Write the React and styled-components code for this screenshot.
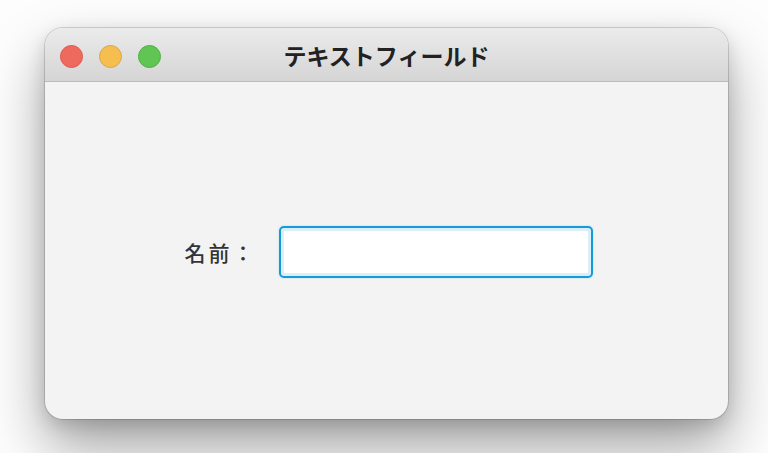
import React from "react";
import styled, { createGlobalStyle } from "styled-components";

const GlobalStyle = createGlobalStyle`
  html, body {
    margin: 0;
    padding: 0;
    background: #fdfdfd;
    font-family: "Noto Sans CJK JP", "Noto Sans", sans-serif;
  }
`;

const Page = styled.div`
  width: 768px;
  height: 453px;
  box-sizing: border-box;
  padding: 28px 0 0 45px;
  overflow: hidden;
`;

const Window = styled.div`
  width: 683px;
  height: 391px;
  border-radius: 18px;
  background: #f3f3f3;
  display: flex;
  flex-direction: column;
  overflow: hidden;
  box-shadow: 0 0 0 1px rgba(0, 0, 0, 0.14), 0 28px 56px rgba(0, 0, 0, 0.36),
    0 6px 18px rgba(0, 0, 0, 0.14);
`;

const TitleBar = styled.div`
  height: 53px;
  flex-shrink: 0;
  display: grid;
  grid-template-columns: 1fr auto 1fr;
  align-items: center;
  padding: 0 15px;
  background: linear-gradient(#ebebeb, #d5d5d5);
  border-bottom: 1px solid #bbbbbb;
`;

const Lights = styled.div`
  display: flex;
  gap: 16px;
  padding-top: 3px;
`;

const Light = styled.span`
  width: 23px;
  height: 23px;
  border-radius: 50%;
  box-sizing: border-box;
  background: ${(p) => p.$color};
  border: 1px solid ${(p) => p.$edge};
`;

const Title = styled.div`
  font-size: 23px;
  font-weight: 700;
  color: #222;
`;

const Body = styled.div`
  flex: 1;
  display: flex;
  align-items: center;
  justify-content: center;
  gap: 22px;
  padding: 2px 0 0 4px;
`;

const Label = styled.label`
  font-size: 21px;
  font-weight: 500;
  color: #333;
  letter-spacing: 3px;
`;

const Field = styled.input`
  width: 314px;
  height: 52px;
  box-sizing: border-box;
  border: 2px solid #159bd8;
  border-radius: 5px;
  background: #fff;
  outline: none;
  padding: 0 8px;
  font-size: 18px;
  box-shadow: inset 0 0 0 3px #dbeff9, 0 0 2px rgba(21, 155, 216, 0.35);
`;

export default function App() {
  return (
    <Page>
      <GlobalStyle />
      <Window>
        <TitleBar>
          <Lights>
            <Light $color="#ee6a5f" $edge="#d85a50" />
            <Light $color="#f6be4f" $edge="#dea63f" />
            <Light $color="#61c554" $edge="#50ad45" />
          </Lights>
          <Title>テキストフィールド</Title>
          <span />
        </TitleBar>
        <Body>
          <Label htmlFor="name">名前：</Label>
          <Field id="name" type="text" />
        </Body>
      </Window>
    </Page>
  );
}
